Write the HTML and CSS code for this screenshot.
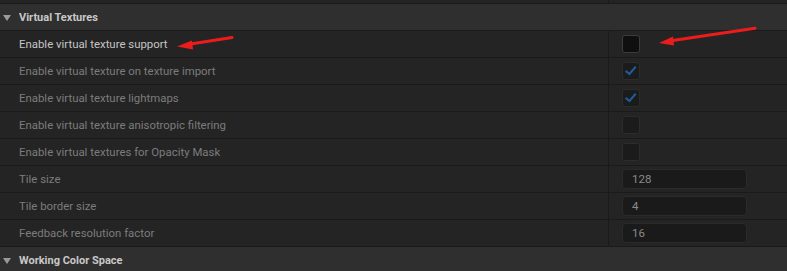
FILE: index.html
```html
<!DOCTYPE html>
<html>
<head>
<meta charset="utf-8">
<link rel="stylesheet" href="styles.css">
</head>
<body>
<div class="panel">
  <div class="row strip"><div class="name"></div><div class="value"></div></div>
  <div class="header"><span class="tri"></span>Virtual Textures</div>
  <div class="row"><div class="name bright">Enable virtual texture support</div><div class="value"><span class="cb on"></span></div></div>
  <div class="row"><div class="name">Enable virtual texture on texture import</div><div class="value"><span class="cb"><svg viewBox="0 0 18 18" class="check"><path d="M4.5 9.5 L7.5 12 L13 5.5"/></svg></span></div></div>
  <div class="row"><div class="name">Enable virtual texture lightmaps</div><div class="value"><span class="cb"><svg viewBox="0 0 18 18" class="check"><path d="M4.5 9.5 L7.5 12 L13 5.5"/></svg></span></div></div>
  <div class="row"><div class="name">Enable virtual texture anisotropic filtering</div><div class="value"><span class="cb"></span></div></div>
  <div class="row"><div class="name">Enable virtual textures for Opacity Mask</div><div class="value"><span class="cb"></span></div></div>
  <div class="row"><div class="name">Tile size</div><div class="value"><span class="num">128</span></div></div>
  <div class="row"><div class="name">Tile border size</div><div class="value"><span class="num">4</span></div></div>
  <div class="row"><div class="name">Feedback resolution factor</div><div class="value"><span class="num">16</span></div></div>
  <div class="header"><span class="tri"></span>Working Color Space</div>
  <svg class="arrows" width="787" height="271" viewBox="0 0 787 271">
    <line x1="232" y1="37.5" x2="189" y2="44.2"/>
    <polygon points="177,46.5 192,40.5 193,49.5"/>
    <line x1="755" y1="28.3" x2="671" y2="40.8"/>
    <polygon points="659,43 673,36.5 674,45.5"/>
  </svg>
</div>
</body>
</html>
```

FILE: styles.css
```css
html, body {
  margin: 0;
  padding: 0;
  background: #242424;
}
.panel {
  position: relative;
  width: 787px;
  height: 271px;
  overflow: hidden;
  font-family: Roboto, "Noto Sans", sans-serif;
  font-size: 11.4px;
  background: #242424;
}
.row {
  display: flex;
  height: 26px;
  border-bottom: 1px solid #1a1a1a;
  background: #242424;
}
.row.strip {
  height: 3px;
}
.name {
  border-right: 1px solid #1a1a1a;
  box-sizing: border-box;
  width: 609px;
  padding-left: 19px;
  display: flex;
  align-items: center;
  color: #7c7c7c;
  padding-bottom: 1px;
}
.name.bright {
  color: #c4c4c4;
}
.value {
  flex: 1;
  display: flex;
  align-items: center;
  padding-left: 13px;
}
.header {
  height: 26px;
  border-bottom: 1px solid #1a1a1a;
  background: #2f2f2f;
  display: flex;
  align-items: center;
  font-weight: bold;
  font-size: 11px;
  color: #c8c8c8;
  padding-left: 19px;
  position: relative;
}
.tri {
  position: absolute;
  left: 3px;
  top: 11px;
  width: 0;
  height: 0;
  border-left: 4.5px solid transparent;
  border-right: 4.5px solid transparent;
  border-top: 6px solid #9a9a9a;
}
.cb {
  width: 16px;
  height: 16px;
  border: 1px solid #2c2c2c;
  border-radius: 3px;
  background: #1b1b1b;
  display: inline-block;
  position: relative;
}
.cb.on {
  background: #0f0f0f;
  border-color: #3c3c3c;
}
.check {
  position: absolute;
  left: -1px;
  top: -1px;
  width: 18px;
  height: 18px;
}
.check path {
  fill: none;
  stroke: #1f5a9a;
  stroke-width: 2.2;
  stroke-linecap: square;
}
.num {
  box-sizing: border-box;
  width: 125px;
  height: 20px;
  border: 1px solid #2a2a2a;
  border-radius: 4px;
  background: #1a1a1a;
  color: #8a8a8a;
  display: flex;
  align-items: center;
  padding-left: 9px;
  font-size: 11.5px;
}
.arrows {
  position: absolute;
  left: 0;
  top: 0;
  pointer-events: none;
}
.arrows line {
  stroke: #ec1c1c;
  stroke-width: 3;
  stroke-linecap: round;
}
.arrows polygon {
  fill: #ec1c1c;
}
```
